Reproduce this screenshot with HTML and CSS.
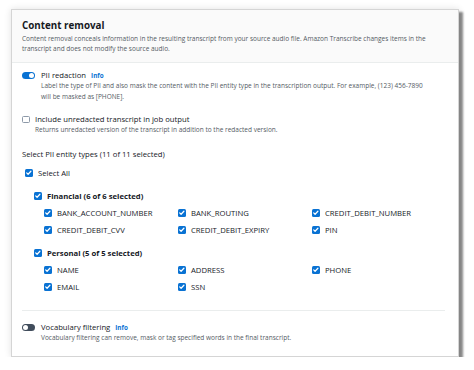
FILE: index.html
```html
<!DOCTYPE html>
<html>
<head>
<meta charset="utf-8">
<link rel="stylesheet" href="styles.css">
</head>
<body>
<div class="card">
  <div class="header">
    <div class="title">Content removal</div>
    <div class="hdesc">Content removal conceals information in the resulting transcript from your source audio file. Amazon Transcribe changes items in the transcript and does not modify the source audio.</div>
  </div>
  <div class="content">
    <div class="row pii">
      <span class="toggle on"><span class="knob"></span></span>
      <span class="label">PII redaction</span>
      <span class="info">Info</span>
    </div>
    <div class="desc indent-t">Label the type of PII and also mask the content with the PII entity type in the transcription output. For example, (123) 456-7890 will be masked as [PHONE].</div>

    <div class="row include">
      <span class="cb empty"></span>
      <span class="label">Include unredacted transcript in job output</span>
    </div>
    <div class="desc indent-c">Returns unredacted version of the transcript in addition to the redacted version.</div>

    <div class="section-label">Select PII entity types (11 of 11 selected)</div>

    <div class="row all">
      <span class="cb"><svg viewBox="0 0 8 8"><path d="M1.8 4.1 L3.3 5.6 L6.3 2.4" /></svg></span>
      <span class="label">Select All</span>
    </div>

    <div class="row group">
      <span class="cb"><svg viewBox="0 0 8 8"><path d="M1.8 4.1 L3.3 5.6 L6.3 2.4" /></svg></span>
      <span class="label bold">Financial (6 of 6 selected)</span>
    </div>
    <div class="items">
      <div class="item"><span class="cb"><svg viewBox="0 0 8 8"><path d="M1.8 4.1 L3.3 5.6 L6.3 2.4" /></svg></span><span class="label">BANK_ACCOUNT_NUMBER</span></div>
      <div class="item"><span class="cb"><svg viewBox="0 0 8 8"><path d="M1.8 4.1 L3.3 5.6 L6.3 2.4" /></svg></span><span class="label">BANK_ROUTING</span></div>
      <div class="item"><span class="cb"><svg viewBox="0 0 8 8"><path d="M1.8 4.1 L3.3 5.6 L6.3 2.4" /></svg></span><span class="label">CREDIT_DEBIT_NUMBER</span></div>
      <div class="item"><span class="cb"><svg viewBox="0 0 8 8"><path d="M1.8 4.1 L3.3 5.6 L6.3 2.4" /></svg></span><span class="label">CREDIT_DEBIT_CVV</span></div>
      <div class="item"><span class="cb"><svg viewBox="0 0 8 8"><path d="M1.8 4.1 L3.3 5.6 L6.3 2.4" /></svg></span><span class="label">CREDIT_DEBIT_EXPIRY</span></div>
      <div class="item"><span class="cb"><svg viewBox="0 0 8 8"><path d="M1.8 4.1 L3.3 5.6 L6.3 2.4" /></svg></span><span class="label">PIN</span></div>
    </div>

    <div class="row group">
      <span class="cb"><svg viewBox="0 0 8 8"><path d="M1.8 4.1 L3.3 5.6 L6.3 2.4" /></svg></span>
      <span class="label bold">Personal (5 of 5 selected)</span>
    </div>
    <div class="items">
      <div class="item"><span class="cb"><svg viewBox="0 0 8 8"><path d="M1.8 4.1 L3.3 5.6 L6.3 2.4" /></svg></span><span class="label">NAME</span></div>
      <div class="item"><span class="cb"><svg viewBox="0 0 8 8"><path d="M1.8 4.1 L3.3 5.6 L6.3 2.4" /></svg></span><span class="label">ADDRESS</span></div>
      <div class="item"><span class="cb"><svg viewBox="0 0 8 8"><path d="M1.8 4.1 L3.3 5.6 L6.3 2.4" /></svg></span><span class="label">PHONE</span></div>
      <div class="item"><span class="cb"><svg viewBox="0 0 8 8"><path d="M1.8 4.1 L3.3 5.6 L6.3 2.4" /></svg></span><span class="label">EMAIL</span></div>
      <div class="item"><span class="cb"><svg viewBox="0 0 8 8"><path d="M1.8 4.1 L3.3 5.6 L6.3 2.4" /></svg></span><span class="label">SSN</span></div>
    </div>

    <div class="sep"></div>

    <div class="row vocab">
      <span class="toggle off"><span class="knob"></span></span>
      <span class="label">Vocabulary filtering</span>
      <span class="info">Info</span>
    </div>
    <div class="desc indent-t">Vocabulary filtering can remove, mask or tag specified words in the final transcript.</div>
  </div>
</div>
</body>
</html>
```

FILE: styles.css
```css
* { box-sizing: border-box; }
body {
  margin: 0;
  padding: 9px 0 0 11px;
  background: #ffffff;
  font-family: "Open Sans", "Noto Sans", sans-serif;
  color: #16191f;
}
.card {
  width: 448px;
  height: 348px;
  background: #ffffff;
  border: 1px solid #d5d5d5;
  box-shadow: 4px 3px 2px rgba(0,0,0,0.45), 0 0 7px rgba(0,0,0,0.12);
}
.header {
  background: #fafafa;
  border-bottom: 1px solid #eaeded;
  padding: 9px 11px 8px 10px;
  height: 53px;
}
.title {
  font-size: 9.8px;
  font-weight: 700;
  line-height: 14px;
  margin-bottom: 1px;
}
.hdesc {
  font-size: 6.5px;
  line-height: 10px;
  color: #545b64;
}
.content {
  padding: 7px 11px 0 10px;
}
.row {
  display: flex;
  align-items: center;
  height: 11px;
}
.label {
  font-size: 7.7px;
  line-height: 11px;
  white-space: nowrap;
}
.bold { font-weight: 700; }
.info {
  font-size: 6.3px;
  font-weight: 700;
  color: #0972d3;
  margin-left: 5px;
}
.toggle {
  width: 13px;
  height: 7px;
  border-radius: 4px;
  position: relative;
  margin-right: 6px;
  flex: none;
}
.toggle.on { background: #0972d3; }
.toggle.off { background: #414d5c; }
.knob {
  position: absolute;
  top: 1px;
  width: 5px;
  height: 5px;
  border-radius: 50%;
  background: #ffffff;
}
.toggle.on .knob { right: 1px; }
.toggle.off .knob { left: 1px; }
.desc {
  font-size: 6.5px;
  line-height: 10.5px;
  color: #545b64;
}
.indent-t { padding-left: 19px; max-width: 405px; }
.indent-c { padding-left: 13px; line-height: 10px; }
.cb {
  width: 7.5px;
  height: 7.5px;
  border-radius: 1.5px;
  background: #0972d3;
  margin-right: 5.5px;
  flex: none;
  display: inline-flex;
}
.cb svg {
  width: 100%;
  height: 100%;
  fill: none;
  stroke: #ffffff;
  stroke-width: 1.3;
  stroke-linecap: round;
  stroke-linejoin: round;
}
.cb.empty {
  background: #ffffff;
  border: 1px solid #8d99a8;
}
.include { margin-top: 12px; }
.section-label {
  margin-top: 13.5px;
  font-size: 7.7px;
  line-height: 11px;
}
.all { margin-top: 8px; padding-left: 3px; }
.group { margin-top: 12px; padding-left: 12px; }
.items {
  display: grid;
  grid-template-columns: 134px 134px 134px;
  row-gap: 6px;
  padding-left: 22px;
  margin-top: 6px;
}
.item {
  display: flex;
  align-items: center;
  height: 11px;
}
.sep {
  margin-top: 17.5px;
  height: 1px;
  background: #eaeded;
  margin-right: 2px;
}
.vocab { margin-top: 11px; }
```
